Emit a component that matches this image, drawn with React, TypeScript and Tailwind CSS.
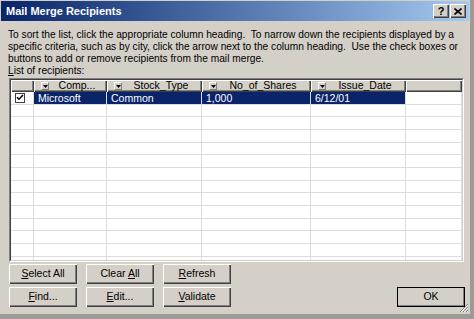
import React from 'react';

const font = "font-['Liberation_Sans',Arial,sans-serif]";

const cols = [
  { w: 'w-[23px]', label: '' },
  { w: 'w-[73px]', label: 'Comp...' },
  { w: 'w-[95px]', label: 'Stock_Type' },
  { w: 'w-[109px]', label: 'No_of_Shares' },
  { w: 'w-[95px]', label: 'Issue_Date' },
  { w: 'flex-1', label: '' },
];

const raised = 'shadow-[inset_1px_1px_0_#fff,inset_-1px_-1px_0_#404040,inset_-2px_-2px_0_#808080]';

const HeaderCell: React.FC<{ w: string; label: string; arrow: boolean }> = ({ w, label, arrow }) => (
  <div className={`${w} h-full flex items-center bg-[#d4d0c8] ${raised} shrink-0 relative z-10`}>
    {arrow && (
      <span className="ml-[7px] w-[8px] h-[8px] bg-[#d4d0c8] border border-t-white border-l-white border-r-[#808080] border-b-[#808080] flex items-center justify-center shrink-0">
        <svg width="5" height="3" viewBox="0 0 5 3">
          <path d="M0 0h5L2.5 3z" fill="#000" />
        </svg>
      </span>
    )}
    <span className="flex-1 text-center text-[10.5px] leading-[10px] -mt-[2px] text-black pr-[2px] whitespace-nowrap">{label}</span>
  </div>
);

const Btn: React.FC<{ u: string; rest: string; pre?: string; def?: boolean }> = ({ u, rest, pre = '', def }) => (
  <button
    className={`w-[68px] h-[20px] bg-[#d4d0c8] text-[10.5px] text-black flex items-center justify-center ${raised} ${
      def ? 'outline outline-1 outline-black -outline-offset-1' : ''
    }`}
  >
    <span className="whitespace-pre">
      {pre}
      <span className="underline underline-offset-1">{u}</span>
      {rest}
    </span>
  </button>
);

export default function App() {
  const rows = Array.from({ length: 14 });
  return (
    <div className={`w-[474px] h-[319px] bg-[#9d9b97] overflow-hidden ${font}`}>
      <div className="w-[470px] h-[314px] bg-[#d4d0c8] flex flex-col relative">
        {/* title bar */}
        <div className="h-[20px] mt-[1px] mx-[1px] bg-gradient-to-r from-[#0a246a] to-[#a6caf0] flex items-center pl-[5px] pr-[3px] shrink-0">
          <span className="text-white font-bold text-[11px] leading-none flex-1">Mail Merge Recipients</span>
          <span className={`w-[16px] h-[14px] bg-[#d4d0c8] ${raised} flex items-center justify-center text-[11px] font-bold leading-none`}>?</span>
          <span className={`w-[16px] h-[14px] ml-[1px] bg-[#d4d0c8] ${raised} flex items-center justify-center`}>
            <svg width="8" height="7" viewBox="0 0 8 7">
              <path d="M0.5 0.5L7.5 6.5M7.5 0.5L0.5 6.5" stroke="#000" strokeWidth="1.6" />
            </svg>
          </span>
        </div>

        {/* instructions */}
        <div className="pl-[8px] pt-[8px] text-[10.2px] leading-[12px] text-black whitespace-nowrap shrink-0">
          <p>To sort the list, click the appropriate column heading.&nbsp; To narrow down the recipients displayed by a</p>
          <p>specific criteria, such as by city, click the arrow next to the column heading.&nbsp; Use the check boxes or</p>
          <p>buttons to add or remove recipients from the mail merge.</p>
          <p>
            <span className="underline">L</span>ist of recipients:
          </p>
        </div>

        {/* list */}
        <div className="ml-[9px] mt-[1px] w-[455px] h-[184px] shrink-0 border border-t-[#808080] border-l-[#808080] border-r-white border-b-white">
          <div className="w-full h-full bg-white border border-t-[#404040] border-l-[#404040] border-r-[#d4d0c8] border-b-[#d4d0c8] overflow-hidden flex flex-col">
            <div className="h-[12px] flex shrink-0">
              {cols.map((c, i) => (
                <HeaderCell key={i} w={c.w} label={c.label} arrow={i > 0 && i < 5} />
              ))}
            </div>
            {rows.map((_, r) => (
              <div key={r} className="h-[12.67px] flex shrink-0 border-b border-[#dcdcdc]">
                {cols.map((c, i) => {
                  const sel = r === 0 && i > 0 && i < 5;
                  const text = r === 0 ? ['', 'Microsoft', 'Common', '1,000', '6/12/01', ''][i] : '';
                  return (
                    <div
                      key={i}
                      className={`${c.w} shrink-0 h-full border-r border-[#dcdcdc] flex items-center text-[10.5px] leading-none pl-[4px] ${
                        sel ? 'bg-[#0a246a] text-white' : 'text-black'
                      }`}
                    >
                      {r === 0 && i === 0 ? (
                        <span className="w-[10px] h-[10px] border border-[#404040] bg-white flex items-center justify-center">
                          <svg width="8" height="7" viewBox="0 0 8 7">
                            <path d="M1 3.2L3 5.2L7 1" stroke="#000" strokeWidth="1.6" fill="none" />
                          </svg>
                        </span>
                      ) : (
                        text
                      )}
                    </div>
                  );
                })}
              </div>
            ))}
          </div>
        </div>

        {/* buttons */}
        <div className="flex pl-[9px] pr-[5px] mt-[2px]">
          <div className="flex flex-col gap-[3px]">
            <div className="flex gap-[9px]">
              <Btn u="S" rest="elect All" />
              <Btn pre="Clear " u="A" rest="ll" />
              <Btn u="R" rest="efresh" />
            </div>
            <div className="flex gap-[9px]">
              <Btn u="F" rest="ind..." />
              <Btn u="E" rest="dit..." />
              <Btn u="V" rest="alidate" />
            </div>
          </div>
          <div className="flex-1 flex justify-end items-end">
            <Btn u="" rest="OK" def />
          </div>
        </div>

        {/* resize grip */}
        <svg className="absolute right-[1px] bottom-[1px]" width="10" height="10" viewBox="0 0 10 10">
          <path d="M9 1L1 9M9 4L4 9M9 7L7 9" stroke="#808080" strokeWidth="1" />
          <path d="M9 2L2 9M9 5L5 9M9 8L8 9" stroke="#fff" strokeWidth="1" />
        </svg>
      </div>
    </div>
  );
}
